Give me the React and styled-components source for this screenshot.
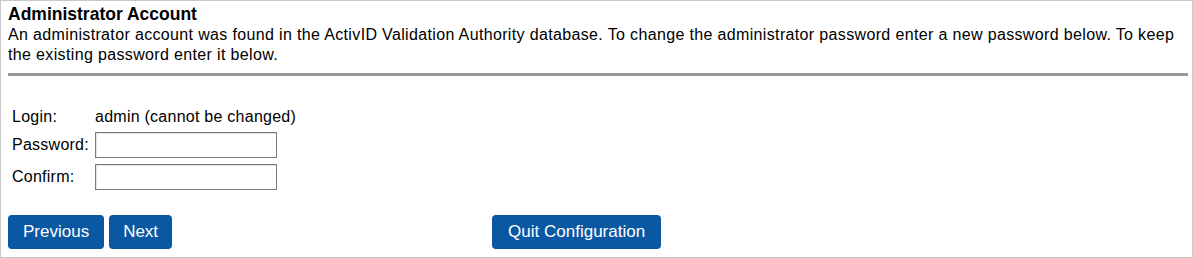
import styled, { createGlobalStyle } from "styled-components";

const GlobalStyle = createGlobalStyle`
  html, body {
    margin: 0;
    padding: 0;
    background: #ffffff;
  }
  body {
    font-family: "Liberation Sans", Arial, sans-serif;
    color: #000000;
  }
`;

const Page = styled.div`
  box-sizing: border-box;
  width: 1193px;
  height: 258px;
  border: 1px solid #c8c8c8;
  padding: 2px 4px 0 7px;
`;

const Title = styled.h1`
  margin: 0;
  font-size: 17.5px;
  font-weight: bold;
  line-height: 22px;
`;

const Intro = styled.p`
  margin: 0;
  font-size: 16px;
  line-height: 20px;
  letter-spacing: 0.35px;
`;

const Rule = styled.hr`
  margin: 8px 0 0 0;
  border: none;
  height: 3px;
  background: #999999;
`;

const Form = styled.div`
  display: grid;
  grid-template-columns: 83px 182px;
  grid-template-rows: 24px 32px 32px;
  align-items: center;
  margin: 29px 0 0 4px;
  font-size: 16px;
  letter-spacing: 0.25px;
`;

const Label = styled.span``;

const Value = styled.span`
  white-space: nowrap;
`;

const Input = styled.input`
  box-sizing: border-box;
  width: 182px;
  height: 26px;
  border: 1px solid #7a7a7a;
  box-shadow: inset 1px 1px 0 #e2e2e2;
  padding: 0 4px;
  font: inherit;
`;

const Buttons = styled.div`
  display: flex;
  align-items: center;
  margin-top: 22px;
`;

const Button = styled.button`
  height: 34px;
  padding: 0 ${({ pad }) => pad ?? "14px"};
  margin-right: ${({ gap }) => gap ?? "5px"};
  border: none;
  border-radius: 4px;
  background: #0a57a2;
  color: #ffffff;
  font-family: "Liberation Sans", Arial, sans-serif;
  font-size: 17px;
  cursor: pointer;
`;

export default function App() {
  return (
    <>
      <GlobalStyle />
      <Page>
        <Title>Administrator Account</Title>
        <Intro>
          An administrator account was found in the ActivID Validation Authority
          database. To change the administrator password enter a new password
          below. To keep the existing password enter it below.
        </Intro>
        <Rule />
        <Form>
          <Label>Login:</Label>
          <Value>admin (cannot be changed)</Value>
          <Label>Password:</Label>
          <Input type="password" />
          <Label>Confirm:</Label>
          <Input type="password" />
        </Form>
        <Buttons>
          <Button pad="15px">Previous</Button>
          <Button gap="320px">Next</Button>
          <Button pad="16px">Quit Configuration</Button>
        </Buttons>
      </Page>
    </>
  );
}
